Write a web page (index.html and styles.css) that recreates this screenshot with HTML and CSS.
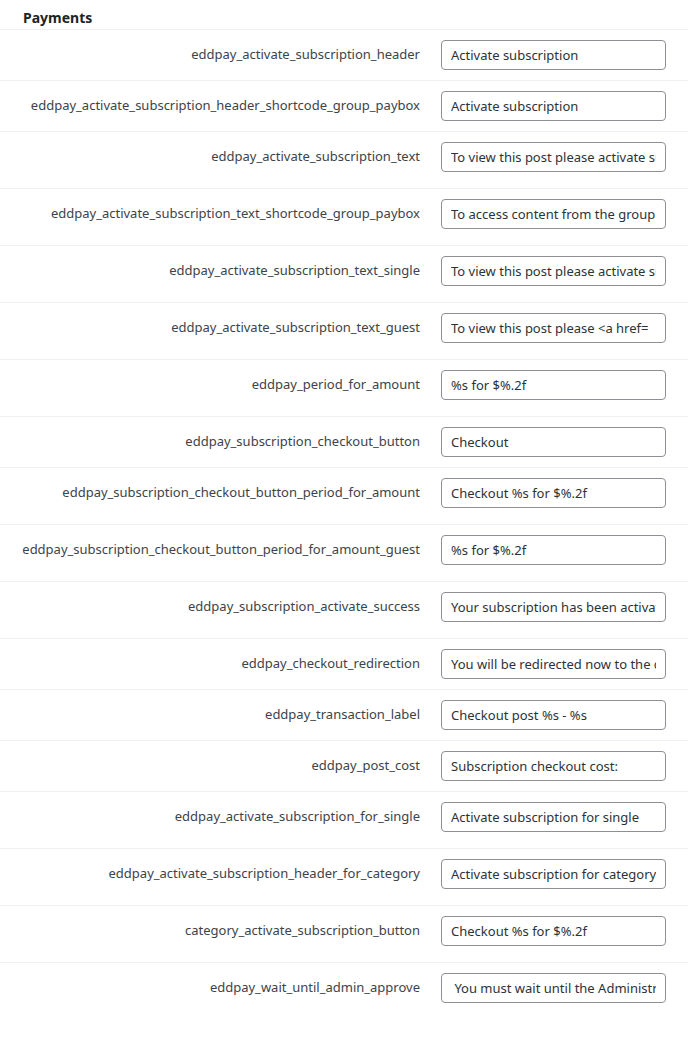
FILE: index.html
```html
<!DOCTYPE html>
<html>
<head>
    <title>Payments</title>
    <link rel="stylesheet" href="styles.css">
</head>
<body>
    <div class="section">
        <h2>Payments</h2>
        <table class="form-table">
            <tr>
                <th>eddpay_activate_subscription_header</th>
                <td><input type="text" value="Activate subscription"></td>
            </tr>
            <tr>
                <th>eddpay_activate_subscription_header_shortcode_group_paybox</th>
                <td><input type="text" value="Activate subscription"></td>
            </tr>
            <tr class="tall">
                <th>eddpay_activate_subscription_text</th>
                <td><input type="text" value="To view this post please activate subscription"></td>
            </tr>
            <tr class="tall">
                <th>eddpay_activate_subscription_text_shortcode_group_paybox</th>
                <td><input type="text" value="To access content from the group please activate subscription"></td>
            </tr>
            <tr class="tall">
                <th>eddpay_activate_subscription_text_single</th>
                <td><input type="text" value="To view this post please activate subscription"></td>
            </tr>
            <tr class="tall">
                <th>eddpay_activate_subscription_text_guest</th>
                <td><input type="text" value="To view this post please <a href=    %s>login</a>"></td>
            </tr>
            <tr class="tall">
                <th>eddpay_period_for_amount</th>
                <td><input type="text" value="%s for $%.2f"></td>
            </tr>
            <tr>
                <th>eddpay_subscription_checkout_button</th>
                <td><input type="text" value="Checkout"></td>
            </tr>
            <tr class="tall">
                <th>eddpay_subscription_checkout_button_period_for_amount</th>
                <td><input type="text" value="Checkout %s for $%.2f"></td>
            </tr>
            <tr class="tall">
                <th>eddpay_subscription_checkout_button_period_for_amount_guest</th>
                <td><input type="text" value="%s for $%.2f"></td>
            </tr>
            <tr class="tall">
                <th>eddpay_subscription_activate_success</th>
                <td><input type="text" value="Your subscription has been activated"></td>
            </tr>
            <tr>
                <th>eddpay_checkout_redirection</th>
                <td><input type="text" value="You will be redirected now to the checkout page"></td>
            </tr>
            <tr>
                <th>eddpay_transaction_label</th>
                <td><input type="text" value="Checkout post %s - %s"></td>
            </tr>
            <tr>
                <th>eddpay_post_cost</th>
                <td><input type="text" value="Subscription checkout cost:"></td>
            </tr>
            <tr class="tall">
                <th>eddpay_activate_subscription_for_single</th>
                <td><input type="text" value="Activate subscription for single"></td>
            </tr>
            <tr class="tall">
                <th>eddpay_activate_subscription_header_for_category</th>
                <td><input type="text" value="Activate subscription for category"></td>
            </tr>
            <tr class="tall">
                <th>category_activate_subscription_button</th>
                <td><input type="text" value="Checkout %s for $%.2f"></td>
            </tr>
            <tr class="tall last">
                <th>eddpay_wait_until_admin_approve</th>
                <td><input type="text" value=" You must wait until the Administrator approves"></td>
            </tr>
        </table>
    </div>
</body>
</html>
```

FILE: styles.css
```css
body {
    font-family: "Noto Sans", "Open Sans", sans-serif;
    background-color: #ffffff;
    color: #3c434a;
    margin: 0;
    padding: 0;
}

.section h2 {
    font-size: 14px;
    font-weight: 700;
    color: #1d2327;
    margin: 0;
    padding: 8px 0 0 23px;
    height: 21px;
    line-height: 20px;
    border-bottom: 1px solid #f0f0f1;
}

.form-table {
    width: 100%;
    border-collapse: collapse;
}

.form-table tr {
    border-bottom: 1px solid #f0f0f1;
}

.form-table tr.last {
    border-bottom: none;
}

.form-table th {
    font-weight: normal;
    font-size: 13px;
    text-align: right;
    white-space: nowrap;
    padding: 10px 21px 10px 0;
    height: 30px;
    vertical-align: top;
    line-height: 28px;
}

.form-table td {
    width: 225px;
    padding: 10px 22px 10px 0;
    vertical-align: top;
}

.form-table tr.tall th,
.form-table tr.tall td {
    padding-bottom: 16px;
}

.form-table input[type="text"] {
    box-sizing: border-box;
    width: 225px;
    height: 30px;
    padding: 0 9px;
    font-family: "Noto Sans", "Open Sans", sans-serif;
    font-size: 13px;
    color: #2c3338;
    border: 1px solid #8c8f94;
    border-radius: 4px;
    background-color: #fff;
    margin: 0;
}
```
